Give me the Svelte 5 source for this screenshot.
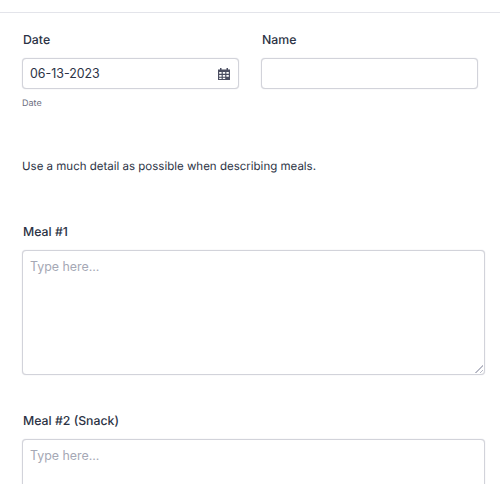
<script lang="ts">
  let date = "06-13-2023";
  let name = "";
</script>

<div class="form">
  <div class="row">
    <div class="field">
      <label for="date">Date</label>
      <div class="date-wrap">
        <input id="date" type="text" bind:value={date} />
        <svg class="cal" width="14" height="14" viewBox="0 0 14 14" fill="#4b4e61">
          <path d="M3 1h1.5v1.5h5V1H11v1.5h2V13H1V2.5h2z" />
          <path fill="#fff" d="M2.2 5h2.4v1.7H2.2zM5.8 5h2.4v1.7H5.8zM9.4 5h2.4v1.7H9.4zM2.2 8h2.4v1.7H2.2zM5.8 8h2.4v1.7H5.8zM9.4 8h2.4v1.7H9.4zM2.2 10.7h2.4v1.2H2.2zM5.8 10.7h2.4v1.2H5.8z" />
        </svg>
      </div>
      <span class="hint">Date</span>
    </div>
    <div class="field">
      <label for="name">Name</label>
      <input id="name" type="text" bind:value={name} />
    </div>
  </div>

  <p class="note">Use a much detail as possible when describing meals.</p>

  <div class="meal first">
    <label for="meal1">Meal #1</label>
    <textarea id="meal1" placeholder="Type here..."></textarea>
  </div>

  <div class="meal">
    <label for="meal2">Meal #2 (Snack)</label>
    <textarea id="meal2" placeholder="Type here..."></textarea>
  </div>
</div>

<style>
  :global(body) {
    margin: 0;
    background: #fff;
    overflow: hidden;
  }

  .form {
    height: 484px;
    overflow: hidden;
    box-sizing: border-box;
    margin-top: 12px;
    padding: 0 15px 0 22px;
    border-top: 1px solid #e3e4ea;
    font-family: Inter, "Liberation Sans", sans-serif;
    color: #2c3345;
    text-rendering: geometricPrecision;
  }

  .row {
    display: flex;
    gap: 22px;
    padding-top: 18px;
  }

  .field {
    width: 217px;
  }

  label {
    display: block;
    margin: 0 0 9px 1px;
    font-size: 12.3px;
    line-height: 18px;
    font-weight: 500;
  }

  input,
  textarea {
    display: block;
    box-sizing: border-box;
    width: 100%;
    padding: 0 7px;
    border: 1px solid #d2d3da;
    border-radius: 4px;
    outline: none;
    background: #fff;
    box-shadow: 0 0 1px #c9cad2;
    color: #2c3345;
    font-family: inherit;
    font-size: 12.4px;
  }

  input {
    height: 31px;
  }

  .date-wrap {
    position: relative;
  }

  .cal {
    position: absolute;
    top: 8.5px;
    right: 8px;
  }

  .hint {
    display: block;
    margin-top: 8px;
    font-size: 9px;
    line-height: 13px;
    color: #6c6e80;
  }

  .note {
    margin: 48px 0 0;
    font-size: 11.5px;
    line-height: 16px;
  }

  .meal {
    margin-top: 37px;
  }

  .meal.first {
    margin-top: 49px;
  }

  textarea {
    width: 463px;
    height: 125px;
    padding: 8px 7px;
    line-height: 16px;
    resize: vertical;
  }

  textarea::placeholder {
    color: #a5a8b5;
    opacity: 1;
  }

  textarea::-webkit-resizer {
    background: linear-gradient(135deg, transparent 5.5px, #b9bbc7 5.5px 6.5px, transparent 6.5px 8.5px, #b9bbc7 8.5px 9.5px, transparent 9.5px) right 1px bottom 1px / 8px 8px no-repeat;
  }
</style>
